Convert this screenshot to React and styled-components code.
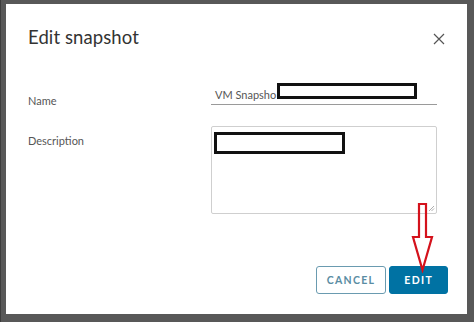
import styled, { createGlobalStyle } from "styled-components";

const GlobalStyle = createGlobalStyle`
  html, body {
    margin: 0;
    padding: 0;
    background: #575757;
  }
  body {
    font-family: Lato, "Open Sans", sans-serif;
  }
`;

const Backdrop = styled.div`
  width: 474px;
  height: 322px;
  padding: 4px 8px 8px 5px;
  box-sizing: border-box;
  background: #585858;
  border-left: 1px solid #3c3c3c;
`;

const Dialog = styled.div`
  position: relative;
  width: 461px;
  height: 310px;
  background: #fff;
  box-sizing: border-box;
  display: flex;
  flex-direction: column;
`;

const Header = styled.div`
  display: flex;
  justify-content: space-between;
  align-items: center;
  padding: 20px 20px 0 22px;
  height: 26px;
`;

const Title = styled.h2`
  margin: 0;
  font-size: 18.5px;
  font-weight: 400;
  color: #333;
  letter-spacing: 0.1px;
`;

const CloseButton = styled.button`
  border: none;
  background: none;
  padding: 0;
  width: 16px;
  height: 16px;
  display: flex;
  align-items: center;
  justify-content: center;
  margin-top: 4px;
`;

const Form = styled.div`
  display: grid;
  grid-template-columns: 183px 226px;
  row-gap: 19px;
  padding: 36px 0 0 22px;
`;

const Label = styled.label`
  font-size: 11px;
  color: #565656;
  padding-top: ${(p) => p.$top || 0}px;
`;

const TextInput = styled.div`
  height: 21px;
  margin-top: -3px;
  padding-left: 4px;
  border-bottom: 1px solid #9a9a9a;
  font-size: 11px;
  line-height: 14px;
  color: #565656;
  white-space: nowrap;
`;

const Redaction = styled.span`
  display: inline-block;
  vertical-align: ${(p) => (p.$inline ? "baseline" : "top")};
  margin-left: ${(p) => p.$ml || 0}px;
  width: ${(p) => p.$w}px;
  height: ${(p) => p.$h}px;
  border: 3px solid #111;
  background: #fff;
  box-sizing: border-box;
`;

const TextArea = styled.div`
  position: relative;
  height: 88px;
  border: 1px solid #cfcfcf;
  border-radius: 2px;
  box-sizing: border-box;
  padding: 5px 0 0 2px;
`;

const Grip = styled.svg`
  position: absolute;
  right: 1px;
  bottom: 1px;
`;

const Footer = styled.div`
  margin-top: auto;
  display: flex;
  justify-content: flex-end;
  gap: 3px;
  padding: 0 19px 20px 0;
`;

const Button = styled.button`
  height: 28px;
  padding: 0 ${(p) => p.$px}px;
  border-radius: 3px;
  font-family: Lato, "Open Sans", sans-serif;
  font-size: 10.5px;
  font-weight: 700;
  letter-spacing: 1.3px;
  border: 1px solid ${(p) => (p.$primary ? "#0072a3" : "#6a9bb0")};
  background: ${(p) => (p.$primary ? "#0072a3" : "#fff")};
  color: ${(p) => (p.$primary ? "#fff" : "#5a8da3")};
`;

const Arrow = styled.svg`
  position: absolute;
  left: 405px;
  top: 199px;
`;

export default function App() {
  return (
    <>
      <GlobalStyle />
      <Backdrop>
        <Dialog>
          <Header>
            <Title>Edit snapshot</Title>
            <CloseButton aria-label="Close">
              <svg width="12" height="12" viewBox="0 0 12 12">
                <path d="M1 1L11 11M11 1L1 11" stroke="#555" strokeWidth="1.2" />
              </svg>
            </CloseButton>
          </Header>
          <Form>
            <Label $top={8}>Name</Label>
            <TextInput>
              VM Snapsho
              <Redaction $inline $ml={1} $w={140} $h={16} />
            </TextInput>
            <Label $top={8}>Description</Label>
            <TextArea>
              <Redaction $w={131} $h={22} />
              <Grip width="7" height="7" viewBox="0 0 7 7">
                <path d="M1 6L6 1M3.5 6L6 3.5" stroke="#999" strokeWidth="0.8" />
              </Grip>
            </TextArea>
          </Form>
          <Footer>
            <Button $px={10}>CANCEL</Button>
            <Button $primary $px={14}>EDIT</Button>
          </Footer>
          <Arrow width="24" height="70" viewBox="0 0 24 70">
            <path
              d="M8 1H15V34H21L11.5 67L2 34H8Z"
              fill="none"
              stroke="#d4121c"
              strokeWidth="2.2"
              strokeLinejoin="miter"
            />
          </Arrow>
        </Dialog>
      </Backdrop>
    </>
  );
}
